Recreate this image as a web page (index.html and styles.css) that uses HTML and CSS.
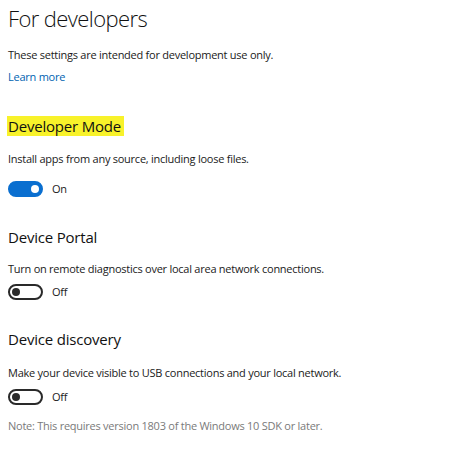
FILE: index.html
```html
<!DOCTYPE html>
<html>
<head>
<meta charset="utf-8">
<link rel="stylesheet" href="styles.css">
</head>
<body>
<main class="page">
  <h1 class="title">For developers</h1>
  <p class="desc intro">These settings are intended for development use only.</p>
  <a class="link">Learn more</a>

  <section class="group first">
    <h2 class="heading"><span class="hl">Developer Mode</span></h2>
    <p class="desc">Install apps from any source, including loose files.</p>
    <div class="toggle-row wide">
      <span class="toggle on"><span class="knob"></span></span>
      <span class="state">On</span>
    </div>
  </section>

  <section class="group">
    <h2 class="heading">Device Portal</h2>
    <p class="desc">Turn on remote diagnostics over local area network connections.</p>
    <div class="toggle-row">
      <span class="toggle"><span class="knob"></span></span>
      <span class="state">Off</span>
    </div>
  </section>

  <section class="group last">
    <h2 class="heading">Device discovery</h2>
    <p class="desc">Make your device visible to USB connections and your local network.</p>
    <div class="toggle-row">
      <span class="toggle"><span class="knob"></span></span>
      <span class="state">Off</span>
    </div>
    <p class="note">Note: This requires version 1803 of the Windows 10 SDK or later.</p>
  </section>
</main>
</body>
</html>
```

FILE: styles.css
```css
html, body {
  margin: 0;
  padding: 0;
  background: #ffffff;
}
body {
  font-family: "Open Sans", "Noto Sans", "Liberation Sans", sans-serif;
  color: #1a1a1a;
  width: 474px;
  height: 455px;
  overflow: hidden;
}
.page {
  padding: 3px 8px 0 8px;
  display: flex;
  flex-direction: column;
  align-items: flex-start;
}
.title {
  margin: 0;
  font-weight: 300;
  font-size: 22px;
  letter-spacing: -0.6px;
  line-height: 30px;
  color: #111;
}
.desc {
  margin: 0;
  font-size: 11px;
  letter-spacing: -0.25px;
  line-height: 16px;
  color: #1a1a1a;
}
.intro {
  margin-top: 14px;
}
.link {
  margin-top: 6px;
  font-size: 11px;
  letter-spacing: -0.25px;
  line-height: 16px;
  color: #0063b1;
}
.group {
  display: flex;
  flex-direction: column;
  align-items: flex-start;
  margin-top: 30px;
}
.group.first {
  margin-top: 31px;
}
.group.last {
  margin-top: 29px;
}
.heading {
  margin: 0 0 14px 0;
  font-weight: 400;
  font-size: 15px;
  letter-spacing: -0.2px;
  line-height: 20px;
  color: #111;
}
.group.first .heading {
  margin-bottom: 15px;
}
.group.last .heading {
  margin-bottom: 16px;
}
.hl {
  background: #f8f22a;
  margin-left: -1px;
  padding: 0 3px 0 1px;
}
.toggle-row {
  display: flex;
  align-items: center;
  gap: 9px;
  margin-top: 7px;
}
.group.last .toggle-row {
  margin-top: 8px;
}
.toggle-row.wide {
  margin-top: 14px;
}
.toggle {
  box-sizing: border-box;
  width: 35px;
  height: 16px;
  border: 2px solid #2a2a2a;
  border-radius: 8px;
  display: flex;
  align-items: center;
  padding: 0 2px;
}
.toggle .knob {
  width: 8px;
  height: 8px;
  border-radius: 50%;
  background: #2a2a2a;
}
.toggle.on {
  background: #0a6fd0;
  border-color: #0a6fd0;
  justify-content: flex-end;
}
.toggle.on .knob {
  background: #fff;
}
.state {
  font-size: 11px;
  letter-spacing: -0.25px;
  line-height: 16px;
  color: #1a1a1a;
}
.note {
  margin: 13px 0 0 0;
  font-size: 11px;
  letter-spacing: -0.25px;
  line-height: 16px;
  color: #7a7a7a;
}
```
